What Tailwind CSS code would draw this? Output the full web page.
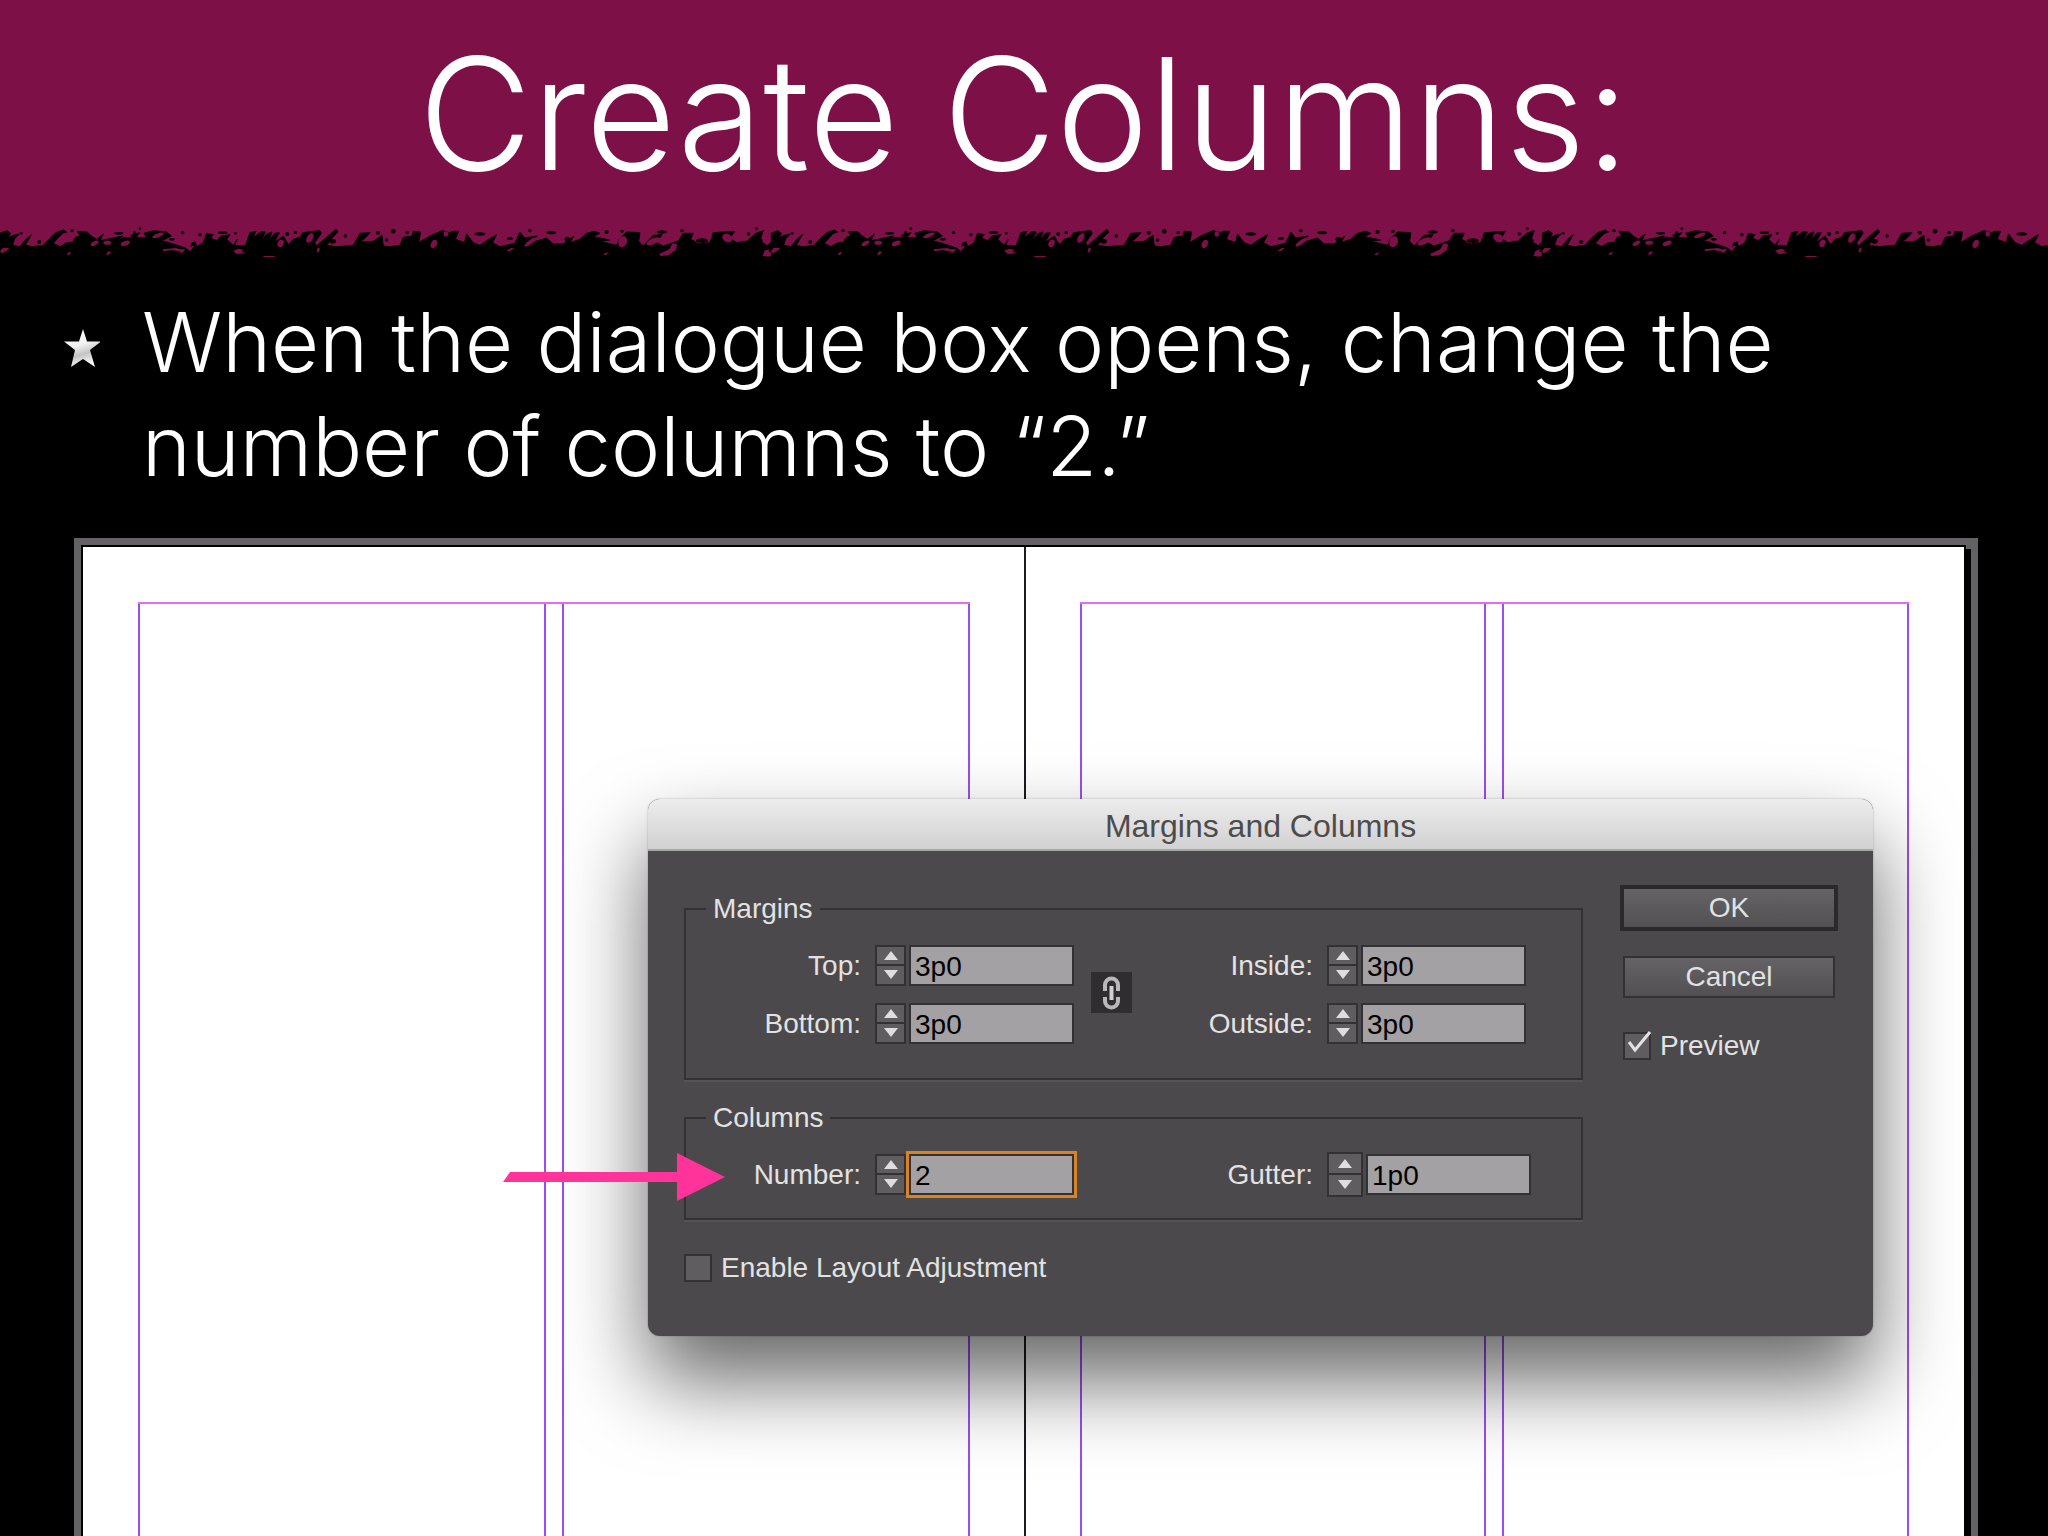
<!DOCTYPE html>
<html lang="en">
<head>
  <meta charset="UTF-8" />
  <meta name="viewport" content="width=device-width, initial-scale=1.0" />
  <title>Create Columns</title>
  <script src="https://cdn.jsdelivr.net/npm/@tailwindcss/browser@4"></script>
</head>
<body class="h-screen overflow-hidden flex flex-col bg-black text-white font-['Inter','Liberation_Sans',sans-serif] font-light">

  <header class="bg-[#7c1047] text-center">
    <h1 class="h-[226px] leading-[228px] text-[156px]">Create Columns:</h1>
    <!-- Torn edge, one tile repeats along the bar -->
    <svg class="block w-full h-9" aria-hidden="true">
      <defs>
        <pattern id="torn" width="2313" height="108" patternUnits="userSpaceOnUse" patternTransform="scale(0.3333)">
          <rect width="2313" height="108" fill="#7c1047" />
          <path fill="#000" stroke="#000" stroke-width="3" stroke-linejoin="round" d="M0 112V22L20 14 32 22 24 36 40 28 58 24 44 38 38 58 60 62 78 40 94 26 84 44 76 58 96 62 130 58 150 36 168 20 190 12 200 18 188 22 176 34 160 52 180 62 200 50 222 48 218 36 240 30 232 16 262 18 274 30 290 40 310 24 300 44 340 36 368 30 352 46 372 34 400 36 392 28 420 20 408 34 440 36 432 22 460 14 500 18 514 30 490 42 470 40 500 48 520 54 540 60 556 66 570 74 576 50 586 48 590 62 610 50 620 22 640 26 632 36 650 44 664 30 690 26 680 40 700 58 712 40 704 58 736 60 750 20 768 16 758 36 782 18 796 18 780 50 800 24 816 18 806 44 824 22 838 20 822 50 850 30 858 44 866 56 880 40 900 34 908 20 960 14 964 22 944 50 950 60 984 30 1008 10 1014 18 996 36 980 58 1010 62 1060 58 1080 22 1110 20 1096 36 1080 48 1120 46 1146 28 1150 60 1170 62 1200 58 1210 34 1236 30 1240 16 1262 18 1256 50 1290 30 1326 14 1350 20 1340 30 1356 16 1376 16 1366 40 1394 50 1400 24 1420 50 1440 58 1460 44 1490 26 1478 50 1500 62 1545 52 1560 18 1574 36 1612 30 1600 42 1580 54 1640 36 1660 54 1690 54 1722 30 1710 50 1740 40 1760 22 1784 16 1800 22 1780 32 1830 42 1800 46 1850 58 1858 40 1880 18 1920 20 1916 46 1930 60 1960 28 1986 26 1970 50 1990 60 2036 44 2050 22 2080 22 2072 40 2100 54 2130 50 2140 20 2204 16 2190 36 2210 50 2240 46 2268 22 2290 14 2282 36 2300 60 2313 50V112Z" />
          <g fill="#7c1047">
            <path d="M0 76L8 66 28 66 20 74 6 82ZM200 84l8-6 6 2-8 8ZM318 86l6-10 10 2-8 8ZM488 70l40-4 20 6-14 4-20-4-24 4ZM536 78l10-8 10 0-8 10ZM700 74l16-6 16 4-8 4 14 6-28 2ZM950 74l4-10 6 4-2 8-6 4ZM788 90h40l-6 3h-30ZM1520 74l14-8 8 0-12 10ZM1810 86l8-6 10 0-12 8ZM1978 84l30-14 10-18 14 2-4 18-22 16-24 2ZM2288 90l6-16 14-4-2 8 24-2-4 8-20 8ZM560 66l24-8-14 18Z" />
            <ellipse cx="214" cy="36" rx="14" ry="7" transform="rotate(-35 214 36)" />
            <ellipse cx="284" cy="52" rx="13" ry="6" transform="rotate(-30 284 52)" />
            <ellipse cx="322" cy="50" rx="12" ry="6" />
            <ellipse cx="376" cy="52" rx="14" ry="7" transform="rotate(-20 376 52)" />
            <ellipse cx="474" cy="28" rx="18" ry="6" transform="rotate(-20 474 28)" />
            <ellipse cx="728" cy="46" rx="12" ry="7" transform="rotate(-30 728 46)" />
            <ellipse cx="842" cy="52" rx="9" ry="12" transform="rotate(25 842 52)" />
            <ellipse cx="930" cy="36" rx="9" ry="16" transform="rotate(30 930 36)" />
            <ellipse cx="1302" cy="54" rx="9" ry="13" transform="rotate(25 1302 54)" />
            <ellipse cx="1338" cy="24" rx="7" ry="8" />
            <ellipse cx="1536" cy="36" rx="17" ry="8" transform="rotate(-20 1536 36)" />
            <ellipse cx="1592" cy="48" rx="22" ry="6" transform="rotate(-35 1592 48)" />
            <ellipse cx="1868" cy="47" rx="13" ry="17" transform="rotate(20 1868 47)" />
            <ellipse cx="1960" cy="46" rx="22" ry="9" transform="rotate(-25 1960 46)" />
            <ellipse cx="2110" cy="38" rx="26" ry="12" transform="rotate(-15 2110 38)" />
            <ellipse cx="2182" cy="36" rx="16" ry="12" transform="rotate(30 2182 36)" />
            <ellipse cx="2298" cy="42" rx="12" ry="6" transform="rotate(-40 2298 42)" />
          </g>
          <g fill="#000">
            <circle cx="64" cy="22" r="4" /><circle cx="118" cy="48" r="6" /><circle cx="216" cy="14" r="5" />
            <ellipse cx="356" cy="22" rx="14" ry="4" /><circle cx="404" cy="20" r="5" /><circle cx="420" cy="8" r="4" />
            <circle cx="548" cy="20" r="5" /><ellipse cx="516" cy="40" rx="9" ry="4" /><circle cx="600" cy="26" r="5" />
            <ellipse cx="668" cy="20" rx="14" ry="4" /><circle cx="706" cy="22" r="4" /><circle cx="862" cy="24" r="6" />
            <circle cx="886" cy="20" r="5" /><circle cx="1036" cy="30" r="5" /><ellipse cx="998" cy="46" rx="10" ry="7" />
            <circle cx="1134" cy="20" r="6" /><circle cx="1160" cy="42" r="5" /><circle cx="1180" cy="16" r="7" />
            <circle cx="1222" cy="20" r="5" /><ellipse cx="1440" cy="24" rx="16" ry="5" /><ellipse cx="1530" cy="38" rx="9" ry="4" />
            <ellipse cx="1654" cy="20" rx="14" ry="5" /><circle cx="1702" cy="40" r="8" /><circle cx="1590" cy="14" r="5" />
            <circle cx="1820" cy="18" r="6" /><circle cx="1866" cy="16" r="5" /><ellipse cx="1986" cy="18" rx="14" ry="5" />
            <ellipse cx="2106" cy="44" rx="18" ry="7" /><circle cx="2046" cy="14" r="5" /><circle cx="2246" cy="24" r="5" />
            <ellipse cx="2232" cy="50" rx="10" ry="6" /><circle cx="2270" cy="8" r="4" />
          </g>
        </pattern>
      </defs>
      <rect width="100%" height="36" fill="url(#torn)" />
    </svg>
  </header>

  <ul class="mt-7 pl-16 pr-16 shrink-0">
    <li class="flex text-[83px] leading-[104px]">
      <svg class="w-9 h-10 mt-[38px] mr-[42px] shrink-0" viewBox="0 0 36 38" aria-hidden="true">
        <defs>
          <linearGradient id="silver" x1="0" y1="0" x2="0.3" y2="1">
            <stop offset="0" stop-color="#fff" />
            <stop offset="0.5" stop-color="#f2f2f2" />
            <stop offset="0.75" stop-color="#c4c4c4" />
            <stop offset="1" stop-color="#f5f5f5" />
          </linearGradient>
        </defs>
        <path fill="url(#silver)" d="M19 0l4 12.500h14L26 21l5 17-12-8-12 8 4-17L0 12.500h15Z" />
      </svg>
      <p>When the dialogue box opens, change the<br />number of columns to “2.”</p>
    </li>
  </ul>

  <main class="relative grow mt-[40px] ml-[74px] mr-[70px] flex pt-[7px] pl-[7px] pr-3 bg-[#636163] font-['Liberation_Sans',Arial,sans-serif] font-normal text-[28px] leading-7">

    <!-- Document spread -->
    <div class="grow grid grid-cols-2 bg-white border-2 border-b-0 border-black shadow-[5px_4px_0_#000]">
      <div class="pt-[55px] pl-[55px] pr-[54px] flex">
        <div class="grow grid grid-cols-2 gap-4 border-t-2 border-[#e46cf2]">
          <div class="border-x-2 border-[#9b4df0]"></div>
          <div class="border-x-2 border-[#9b4df0]"></div>
        </div>
      </div>
      <div class="pt-[55px] pl-[54px] pr-[55px] flex border-l-2 border-[#1c1a1e]">
        <div class="grow grid grid-cols-2 gap-4 border-t-2 border-[#e46cf2]">
          <div class="border-x-2 border-[#9b4df0]"></div>
          <div class="border-x-2 border-[#9b4df0]"></div>
        </div>
      </div>
    </div>

    <!-- Dialog -->
    <form class="absolute left-[574px] top-[261px] w-[1225px] rounded-xl bg-[#4b494b] text-[#e2e2e2] shadow-[0_44px_84px_rgba(0,0,0,0.6),0_0_2px_rgba(0,0,0,0.3)]">
      <h2 class="h-[52px] leading-[54px] rounded-t-xl bg-linear-to-b from-[#ededed] to-[#d2d1d2] border-b-2 border-[#a9a8a9] text-center text-[32px] text-[#4c4c4c]">Margins and Columns</h2>

      <div class="flex gap-[37px] pl-9 pr-[35px] pb-[54px]">
        <div class="grow pt-[44px]">
          <fieldset class="border-2 border-[#333133] shadow-[0_2px_0_#555355]">
            <legend class="ml-5 px-[7px]">Margins</legend>
            <div class="grid grid-cols-[175px_199px_44px_167px_199px] gap-x-[14px] gap-y-[17px] pt-[22px] pb-[34px] items-center">
              <label for="top" class="text-right">Top:</label>
              <div class="flex gap-[3px]">
                <div class="w-[31px] h-[41px] grid grid-rows-2 border-2 border-[#333133] divide-y-2 divide-[#333133]">
                  <button type="button" aria-label="Increase top" class="flex items-center justify-center bg-[#5f5d5f]"><svg class="w-[14px] h-[9px]" viewBox="0 0 14 9"><path fill="#dedede" d="M7 0l7 9H0Z" /></svg></button>
                  <button type="button" aria-label="Decrease top" class="flex items-center justify-center bg-[#5f5d5f]"><svg class="w-[14px] h-[9px]" viewBox="0 0 14 9"><path fill="#dedede" d="M0 0h14L7 9Z" /></svg></button>
                </div>
                <input id="top" type="text" value="3p0" class="w-[165px] h-[41px] pl-1 pt-[2px] border-2 border-[#333133] bg-[#a3a1a3] text-black" />
              </div>
              <button type="button" aria-label="Make all settings the same" class="row-span-2 justify-self-end mb-1 w-[41px] h-[41px] bg-[#2f2d2f]">
                <svg class="w-[41px] h-[41px]" viewBox="0 0 41 41" fill="none">
                  <path stroke="#b9b8b9" stroke-width="4" d="M14 19v-6a6.500 6.500 0 0 1 13 0v6M14 25v4a6.500 6.500 0 0 0 13 0v-4" />
                  <path stroke="#2f2d2f" stroke-width="8" d="M20.500 13v16" />
                  <path stroke="#d0cfd0" stroke-width="4" d="M20.500 14v14" />
                </svg>
              </button>
              <label for="inside" class="text-right">Inside:</label>
              <div class="flex gap-[3px]">
                <div class="w-[31px] h-[41px] grid grid-rows-2 border-2 border-[#333133] divide-y-2 divide-[#333133]">
                  <button type="button" aria-label="Increase inside" class="flex items-center justify-center bg-[#5f5d5f]"><svg class="w-[14px] h-[9px]" viewBox="0 0 14 9"><path fill="#dedede" d="M7 0l7 9H0Z" /></svg></button>
                  <button type="button" aria-label="Decrease inside" class="flex items-center justify-center bg-[#5f5d5f]"><svg class="w-[14px] h-[9px]" viewBox="0 0 14 9"><path fill="#dedede" d="M0 0h14L7 9Z" /></svg></button>
                </div>
                <input id="inside" type="text" value="3p0" class="w-[165px] h-[41px] pl-1 pt-[2px] border-2 border-[#333133] bg-[#a3a1a3] text-black" />
              </div>
              <label for="bottom" class="text-right">Bottom:</label>
              <div class="flex gap-[3px]">
                <div class="w-[31px] h-[41px] grid grid-rows-2 border-2 border-[#333133] divide-y-2 divide-[#333133]">
                  <button type="button" aria-label="Increase bottom" class="flex items-center justify-center bg-[#5f5d5f]"><svg class="w-[14px] h-[9px]" viewBox="0 0 14 9"><path fill="#dedede" d="M7 0l7 9H0Z" /></svg></button>
                  <button type="button" aria-label="Decrease bottom" class="flex items-center justify-center bg-[#5f5d5f]"><svg class="w-[14px] h-[9px]" viewBox="0 0 14 9"><path fill="#dedede" d="M0 0h14L7 9Z" /></svg></button>
                </div>
                <input id="bottom" type="text" value="3p0" class="w-[165px] h-[41px] pl-1 pt-[2px] border-2 border-[#333133] bg-[#a3a1a3] text-black" />
              </div>
              <label for="outside" class="text-right">Outside:</label>
              <div class="flex gap-[3px]">
                <div class="w-[31px] h-[41px] grid grid-rows-2 border-2 border-[#333133] divide-y-2 divide-[#333133]">
                  <button type="button" aria-label="Increase outside" class="flex items-center justify-center bg-[#5f5d5f]"><svg class="w-[14px] h-[9px]" viewBox="0 0 14 9"><path fill="#dedede" d="M7 0l7 9H0Z" /></svg></button>
                  <button type="button" aria-label="Decrease outside" class="flex items-center justify-center bg-[#5f5d5f]"><svg class="w-[14px] h-[9px]" viewBox="0 0 14 9"><path fill="#dedede" d="M0 0h14L7 9Z" /></svg></button>
                </div>
                <input id="outside" type="text" value="3p0" class="w-[165px] h-[41px] pl-1 pt-[2px] border-2 border-[#333133] bg-[#a3a1a3] text-black" />
              </div>
            </div>
          </fieldset>

          <fieldset class="mt-6 border-2 border-[#333133] shadow-[0_2px_0_#555355]">
            <legend class="ml-5 px-[7px]">Columns</legend>
            <div class="grid grid-cols-[175px_199px_44px_167px_204px] gap-x-[14px] pt-[22px] pb-[23px] items-center">
              <label for="number" class="text-right">Number:</label>
              <div class="flex gap-[3px]">
                <div class="w-[31px] h-[41px] grid grid-rows-2 border-2 border-[#333133] divide-y-2 divide-[#333133]">
                  <button type="button" aria-label="Increase number" class="flex items-center justify-center bg-[#5f5d5f]"><svg class="w-[14px] h-[9px]" viewBox="0 0 14 9"><path fill="#dedede" d="M7 0l7 9H0Z" /></svg></button>
                  <button type="button" aria-label="Decrease number" class="flex items-center justify-center bg-[#5f5d5f]"><svg class="w-[14px] h-[9px]" viewBox="0 0 14 9"><path fill="#dedede" d="M0 0h14L7 9Z" /></svg></button>
                </div>
                <input id="number" type="text" value="2" class="w-[165px] h-[41px] pl-1 pt-[2px] border-2 border-[#333133] bg-[#a3a1a3] text-black outline-3 outline-[#d98324]" />
              </div>
              <label for="gutter" class="col-start-4 text-right">Gutter:</label>
              <div class="flex items-center gap-[3px]">
                <div class="w-[36px] h-[45px] -my-1 grid grid-rows-2 border-2 border-[#333133] divide-y-2 divide-[#333133]">
                  <button type="button" aria-label="Increase gutter" class="flex items-center justify-center bg-[#5f5d5f]"><svg class="w-[14px] h-[9px]" viewBox="0 0 14 9"><path fill="#dedede" d="M7 0l7 9H0Z" /></svg></button>
                  <button type="button" aria-label="Decrease gutter" class="flex items-center justify-center bg-[#5f5d5f]"><svg class="w-[14px] h-[9px]" viewBox="0 0 14 9"><path fill="#dedede" d="M0 0h14L7 9Z" /></svg></button>
                </div>
                <input id="gutter" type="text" value="1p0" class="w-[165px] h-[41px] pl-1 pt-[2px] border-2 border-[#333133] bg-[#a3a1a3] text-black" />
              </div>
            </div>
          </fieldset>

          <label class="flex items-center gap-[9px] mt-[34px]">
            <input type="checkbox" class="appearance-none w-7 h-7 border-2 border-[#333133] bg-[#5f5d5f]" />
            Enable Layout Adjustment
          </label>
        </div>

        <div class="w-[218px] pt-[34px] flex flex-col">
          <button type="submit" class="h-[46px] border-4 border-[#2b292b] bg-linear-to-b from-[#656365] to-[#525052] leading-7">OK</button>
          <button type="button" class="h-[42px] mx-[3px] mt-[25px] border-2 border-[#333133] bg-linear-to-b from-[#656365] to-[#525052] leading-7">Cancel</button>
          <label class="relative flex items-center gap-[9px] ml-[3px] mt-[34px]">
            <input type="checkbox" checked class="appearance-none w-7 h-7 border-2 border-[#333133] bg-[#5f5d5f]" />
            <svg class="absolute left-1 -top-px w-6 h-6 pointer-events-none" viewBox="0 0 24 24" fill="none" aria-hidden="true">
              <path stroke="#e2e2e2" stroke-width="3" d="M2 11l6 8L23 1" />
            </svg>
            Preview
          </label>
        </div>
      </div>
    </form>

    <!-- Pointer to the Number field -->
    <svg class="absolute left-[429px] top-[615px] w-[222px] h-12" viewBox="0 0 222 48" aria-hidden="true">
      <path fill="#ff3399" d="M7 19h167V0l48 24-48 24V29H0Z" />
    </svg>
  </main>

</body>
</html>
